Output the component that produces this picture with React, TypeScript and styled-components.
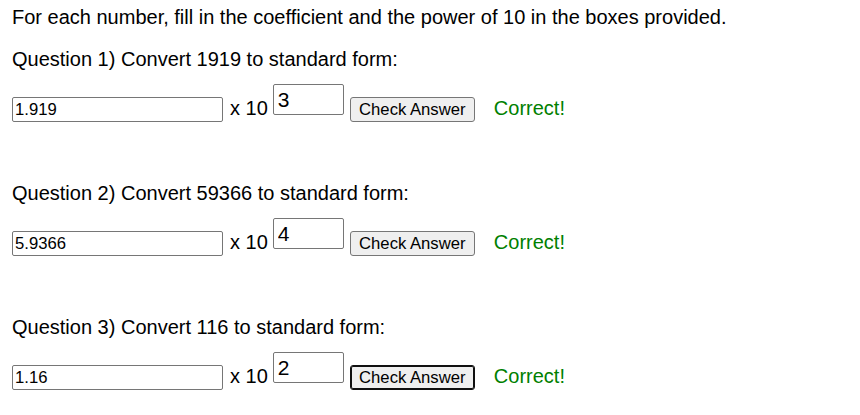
import styled, { createGlobalStyle, css } from "styled-components";

const GlobalStyle = createGlobalStyle`
  body {
    margin: 0;
    background: #ffffff;
    color: #000000;
    font-family: "Liberation Sans", Arial, sans-serif;
  }
`;

const Page = styled.main`
  padding: 6px 12px 0;
  font-size: 20px;
  line-height: 22px;
`;

const Intro = styled.p`
  margin: 0;
`;

const QuizList = styled.div`
  display: flex;
  flex-direction: column;
  gap: 60px;
  margin-top: 20px;
`;

const Block = styled.section``;

const Prompt = styled.p`
  margin: 0 0 14px;
`;

const Row = styled.div`
  white-space: nowrap;
`;

const fieldBase = css`
  box-sizing: border-box;
  border: 1px solid #767676;
  border-radius: 2px;
  background: #ffffff;
  color: #000000;
  font-family: "Liberation Sans", Arial, sans-serif;
  outline: none;
`;

const Coefficient = styled.input`
  ${fieldBase};
  width: 211px;
  height: 25px;
  padding: 1px 2px;
  font-size: 16.67px;
`;

const Times = styled.span`
  margin: 0 5px 0 7px;
`;

const Power = styled.input`
  ${fieldBase};
  width: 71px;
  height: 31px;
  padding: 1px 4px;
  font-size: 21px;
  vertical-align: 8px;
`;

const CheckButton = styled.button<{ $focused?: boolean }>`
  box-sizing: border-box;
  width: 125px;
  height: 25px;
  margin-left: 6px;
  padding: 0 6px;
  border: 1px solid #767676;
  border-radius: 3px;
  background: #efefef;
  color: #000000;
  font-family: "Liberation Sans", Arial, sans-serif;
  font-size: 16.67px;
  cursor: pointer;
  outline: none;
  ${({ $focused }) =>
    $focused &&
    css`
      border-color: #101010;
      box-shadow: inset 0 0 0 1px #101010;
    `}
`;

const Feedback = styled.span<{ $ok: boolean }>`
  margin-left: 19px;
  font-size: 20px;
  color: ${({ $ok }) => ($ok ? "#008000" : "#cc0000")};
`;

const questions = [
  { n: 1919, coef: "1.919", pow: "3" },
  { n: 59366, coef: "5.9366", pow: "4" },
  { n: 116, coef: "1.16", pow: "2" },
];

export default function App() {
  return (
    <>
      <GlobalStyle />
      <Page>
        <Intro>
          For each number, fill in the coefficient and the power of 10 in the boxes provided.
        </Intro>
        <QuizList>
          {questions.map((q, i) => (
            <Block key={q.n}>
              <Prompt>
                Question {i + 1}) Convert {q.n} to standard form:
              </Prompt>
              <Row>
                <Coefficient type="text" defaultValue={q.coef} />
                <Times>x 10</Times>
                <Power type="text" defaultValue={q.pow} />
                <CheckButton $focused={i === questions.length - 1}>Check Answer</CheckButton>
                <Feedback $ok>Correct!</Feedback>
              </Row>
            </Block>
          ))}
        </QuizList>
      </Page>
    </>
  );
}
